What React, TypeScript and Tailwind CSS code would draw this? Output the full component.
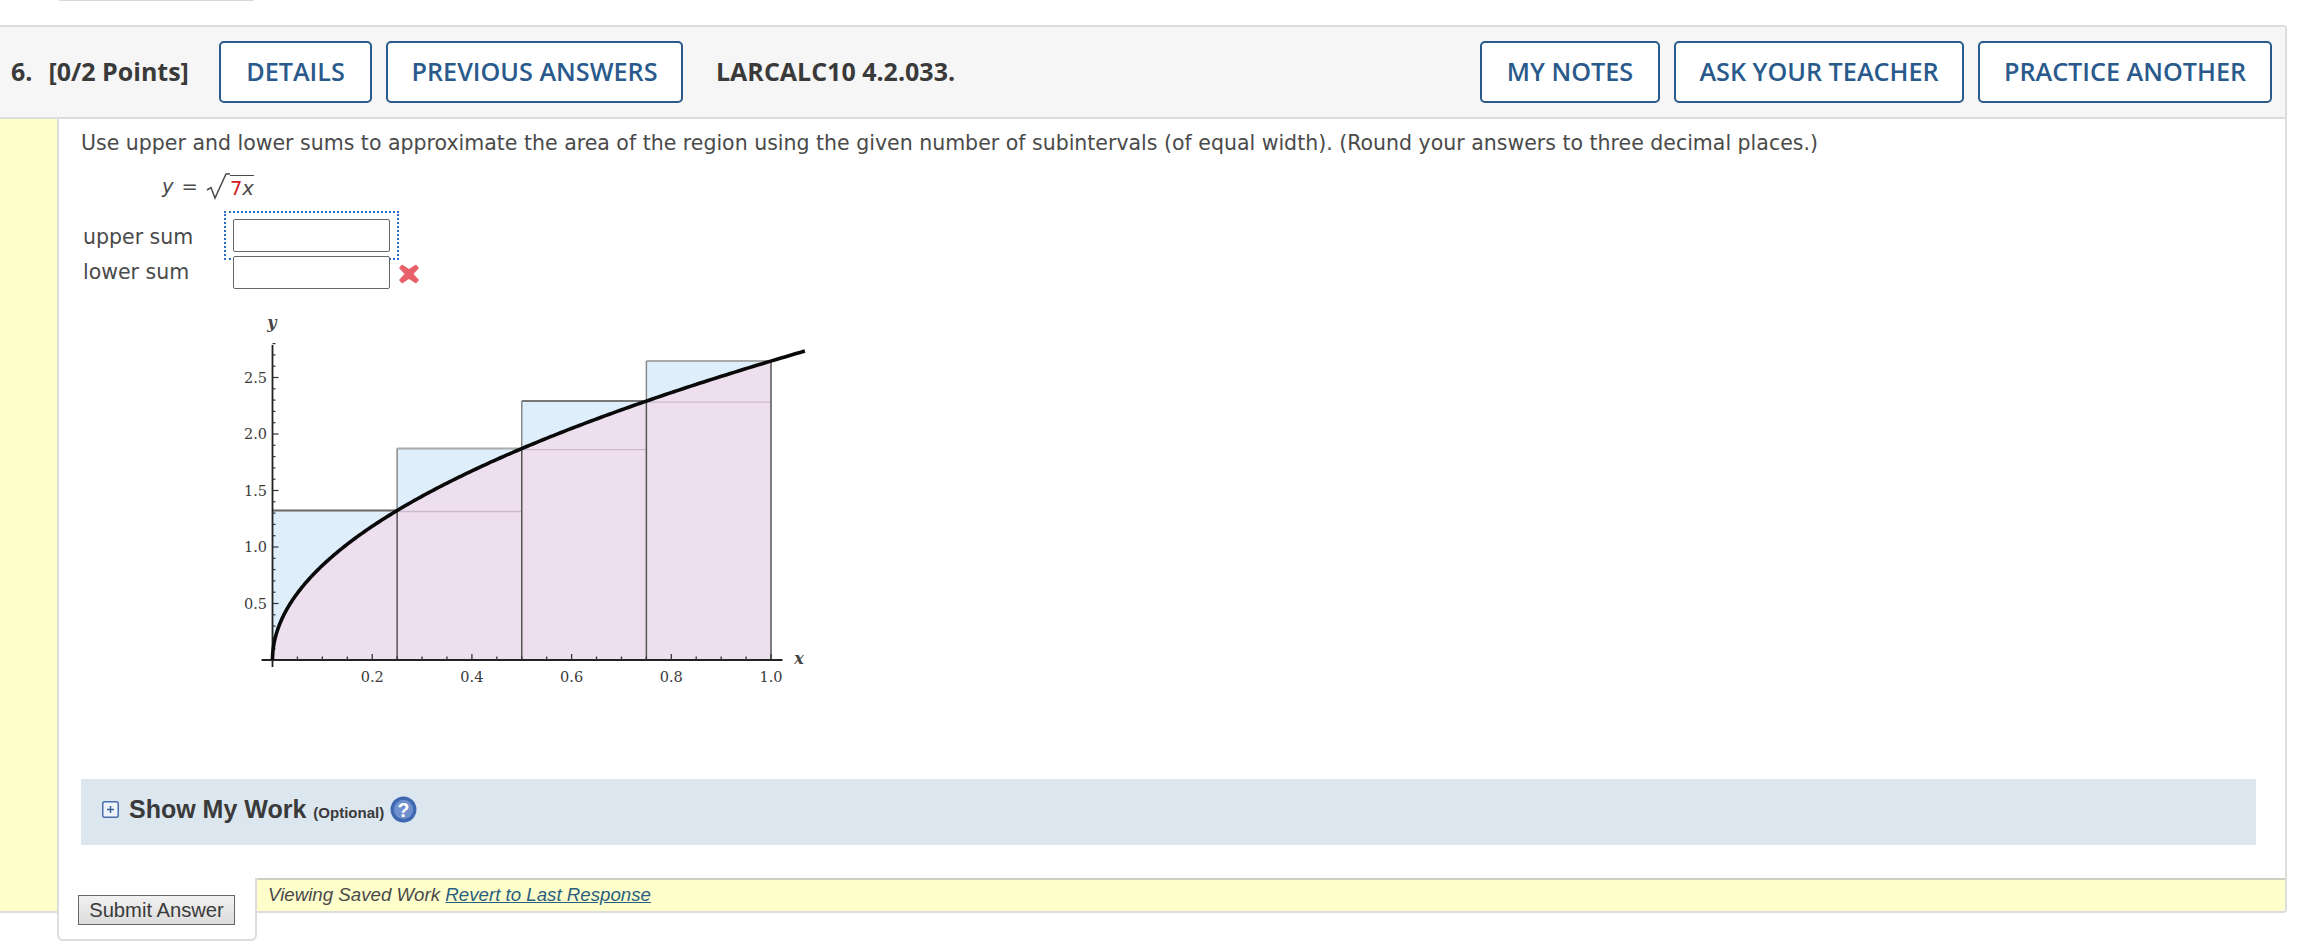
import React from "react";

const X0 = 272.5, Y0 = 660, SX = 498.5, SY = 113;
const px = (x: number) => X0 + x * SX;
const py = (y: number) => Y0 - y * SY;
const f = (x: number) => Math.sqrt(7 * x);
const OX = 240, OY = 310;

function Chart() {
  const pts: string[] = [];
  for (let i = 0; i <= 220; i++) {
    const t = i / 220;
    const x = t * t * 1.068;
    pts.push(`${px(x).toFixed(2)},${py(f(x)).toFixed(2)}`);
  }
  const curve = pts.join(" ");
  const area = `${X0},${Y0} ` + pts.filter((p) => parseFloat(p) <= px(1)).join(" ") + ` ${px(1)},${py(f(1))} ${px(1)},${Y0}`;
  const cols = [0, 0.25, 0.5, 0.75];
  const xTicks = Array.from({ length: 21 }, (_, i) => i * 0.05);
  const yTicks = Array.from({ length: 28 }, (_, i) => (i + 1) * 0.1);
  const serif = { fontFamily: '"DejaVu Serif", "Liberation Serif", serif' };
  return (
    <svg width="580" height="380" viewBox={`${OX} ${OY} 580 380`} className="block">
      {cols.map((c) => (
        <rect key={c} x={px(c)} y={py(f(c + 0.25))} width={0.25 * SX} height={Y0 - py(f(c + 0.25))} fill="#deeefb" />
      ))}
      <polygon points={area} fill="#eedfee" />
      {cols.map((c, i) => (
        <g key={c}>
          {i > 0 && <line x1={px(c)} x2={px(c + 0.25)} y1={py(f(c)) + 1} y2={py(f(c)) + 1} stroke="#c9b9cb" strokeWidth="1.4" />}
          <line x1={px(c)} x2={px(c + 0.25)} y1={py(f(c + 0.25))} y2={py(f(c + 0.25))} stroke={i === 0 ? "#666" : i === 2 ? "#777" : "#aaa"} strokeWidth="2" />
          <line x1={px(c + 0.25)} x2={px(c + 0.25)} y1={py(f(c + 0.25))} y2={Y0} stroke="#555" strokeWidth="1.5" />
          {i > 0 && <line x1={px(c)} x2={px(c)} y1={py(f(c + 0.25))} y2={py(f(c))} stroke="#888" strokeWidth="1.5" />}
        </g>
      ))}
      <line x1={X0 - 11} x2={X0 + 510} y1={Y0} y2={Y0} stroke="#222" strokeWidth="1.8" />
      <line x1={X0} x2={X0} y1="345" y2="667" stroke="#222" strokeWidth="1.8" />
      {xTicks.map((x, i) => (
        <line key={i} x1={px(x)} x2={px(x)} y1={Y0} y2={Y0 - (i % 4 === 0 ? 6 : 3.5)} stroke="#333" strokeWidth="1.3" />
      ))}
      {yTicks.map((y, i) => (
        <line key={i} x1={X0} x2={X0 + ((i + 1) % 5 === 0 ? 6 : 3)} y1={py(y)} y2={py(y)} stroke="#333" strokeWidth="1.2" />
      ))}
      <polyline points={curve} fill="none" stroke="#0a0a0a" strokeWidth="3.6" />
      {[0.2, 0.4, 0.6, 0.8, 1].map((x) => (
        <text key={x} x={px(x)} y="682" textAnchor="middle" fontSize="14.5" fill="#3a3a3a" style={serif}>{x.toFixed(1)}</text>
      ))}
      {[0.5, 1, 1.5, 2, 2.5].map((y) => (
        <text key={y} x="267" y={py(y) + 5} textAnchor="end" fontSize="14.5" fill="#3a3a3a" style={serif}>{y.toFixed(1)}</text>
      ))}
      <text x="272" y="328" textAnchor="middle" fontSize="16" fontStyle="italic" fontWeight="700" fill="#444" style={serif}>y</text>
      <text x="799" y="664" textAnchor="middle" fontSize="16" fontStyle="italic" fontWeight="700" fill="#444" style={serif}>x</text>
    </svg>
  );
}

function HeadBtn({ children, w }: { children: React.ReactNode; w: string }) {
  return (
    <button className={`${w} h-[62px] flex items-center justify-center rounded-[5px] border-2 border-[#2a5a8c] bg-white text-[25.2px] font-semibold text-[#2a5a8c] [font-family:'Open_Sans',sans-serif]`}>
      {children}
    </button>
  );
}

export default function App() {
  return (
    <div className="relative h-[946px] w-[2309px] overflow-hidden bg-white [font-family:'DejaVu_Sans',sans-serif] text-[#4a4a4a]">
      <div className="ml-[59px] h-[1px] w-[195px] rounded-b bg-[#d8d8d8]" />
      <div className="mt-[24px] flex h-[888px] w-[2287px] flex-col rounded-r-[4px] border-y-2 border-r-2 border-[#dddddd]">
        <header className="flex h-[92px] shrink-0 items-center border-b-2 border-[#dddddd] bg-[#f6f6f6] pl-[11px] pr-[13px] [font-family:'Open_Sans',sans-serif] text-[25px] font-bold text-[#3a3a3a]">
          <span className="w-[208px] whitespace-nowrap">6.&nbsp; <span className="ml-[3px]">[0/2 Points]</span></span>
          <HeadBtn w="w-[153px]">DETAILS</HeadBtn>
          <div className="w-[14px]" />
          <HeadBtn w="w-[297px]">PREVIOUS ANSWERS</HeadBtn>
          <span className="ml-[33px] whitespace-nowrap">LARCALC10 4.2.033.</span>
          <div className="flex-1" />
          <div className="flex gap-[14px]">
            <HeadBtn w="w-[180px]">MY NOTES</HeadBtn>
            <HeadBtn w="w-[290px]">ASK YOUR TEACHER</HeadBtn>
            <HeadBtn w="w-[294px]">PRACTICE ANOTHER</HeadBtn>
          </div>
        </header>

        <div className="flex min-h-0 flex-1">
          <div className="w-[59px] shrink-0 border-r-2 border-[#dddddd] bg-[#ffffcc]" />
          <div className="flex min-w-0 flex-1 flex-col">
            <main className="h-[759px] shrink-0 pl-[22px] pr-[30px] text-[20.5px]">
              <p className="pt-[12px] leading-[24px] whitespace-nowrap">
                Use upper and lower sums to approximate the area of the region using the given number of subintervals (of equal width). (Round your answers to three decimal places.)
              </p>
              <div className="ml-[81px] mt-[19px] flex h-[26px] items-center text-[19.5px]">
                <span className="italic">y</span>
                <span className="ml-[8px]">=</span>
                <svg width="24" height="30" viewBox="0 0 24 30" className="ml-[8px] block shrink-0">
                  <path d="M1 18 L5 15.5 L9 26 L20 2 H24" fill="none" stroke="#4a4a4a" strokeWidth="1.5" />
                </svg>
                <span className="border-t-[1.5px] border-[#4a4a4a] leading-[25px] mt-[1px]">
                  <span className="text-[#d3202a]">7</span>
                  <span className="italic">x</span>
                </span>
              </div>
              <div className="mt-[11px] flex">
                <span className="mt-[12px] w-[143px] pl-[2px] leading-[28px]">upper sum</span>
                <div className="h-[49px] w-[175px] border-2 border-dotted border-[#2b6cc4] pl-[7px] pt-[6px]">
                  <div className="h-[33px] w-[157px] rounded-[2px] border border-[#666] bg-white" />
                </div>
              </div>
              <div className="-mt-[4px] flex">
                <span className="mt-[2px] w-[152px] pl-[2px] leading-[28px]">lower sum</span>
                <div className="relative h-[33px] w-[157px] rounded-[2px] border border-[#666] bg-white" />
                <svg width="22" height="22" viewBox="0 0 22 22" className="ml-[8px] mt-[7px] block">
                  <path d="M4 1.5 L11 6 L18 1.5 L21 5 L15.5 11 L21 17 L18 20.5 L11 16 L4 20.5 L1 17 L6.5 11 L1 5 Z" fill="#e8606a" />
                </svg>
              </div>
              <div className="mt-[21px] pl-[159px]">
                <Chart />
              </div>
              <div className="mt-[89px] flex h-[66px] w-[2175px] items-center bg-[#dce6ef] pb-[5px] pl-[21px] [font-family:'Liberation_Sans',sans-serif]">
                <svg width="17" height="17" viewBox="0 0 17 17" className="block shrink-0">
                  <rect x="0.75" y="0.75" width="15.5" height="15.5" rx="2" fill="#eef3fa" stroke="#4a6ea8" strokeWidth="1.5" />
                  <path d="M8.5 5 V12 M5 8.5 H12" stroke="#3a5f9a" strokeWidth="1.5" />
                </svg>
                <span className="ml-[10px] text-[25px] font-bold leading-none text-[#3a3a3a]">Show My Work</span>
                <span className="ml-[7px] mt-[5px] text-[15px] font-bold leading-none text-[#3a3a3a]">(Optional)</span>
                <svg width="27" height="27" viewBox="0 0 25 25" className="ml-[6px] block shrink-0">
                  <circle cx="12.5" cy="12.5" r="12" fill="#3f66b0" />
                  <circle cx="12.5" cy="12.5" r="9" fill="#6f8fcf" />
                  <text x="12.5" y="19" textAnchor="middle" fontSize="18" fontWeight="700" fill="#fff" style={{ fontFamily: '"Liberation Sans", sans-serif' }}>?</text>
                </svg>
              </div>
            </main>
            <div className="flex min-h-0 flex-1">
              <div className="relative z-10 -mb-[30px] -ml-[2px] h-[63px] w-[200px] shrink-0 rounded-b-[6px] border-x-2 border-b-2 border-t-0 border-[#dddddd] bg-white pl-[19px] pt-[17px]">
                <button className="flex h-[30px] w-[157px] items-center justify-center border border-[#666] bg-gradient-to-b from-[#f2f2f2] to-[#dcdcdc] text-[20.2px] text-[#3a3a3a] [font-family:'Liberation_Sans',sans-serif]">
                  Submit Answer
                </button>
              </div>
              <div className="flex-1 rounded-br-[4px] border-t-2 border-[#cfcfc0] bg-[#ffffcc] pl-[11px] text-[18.7px] italic leading-[30px] [font-family:'Liberation_Sans',sans-serif]">
                Viewing Saved Work <a className="text-[#2a6080] underline">Revert to Last Response</a>
              </div>
            </div>
          </div>
        </div>
      </div>
    </div>
  );
}
